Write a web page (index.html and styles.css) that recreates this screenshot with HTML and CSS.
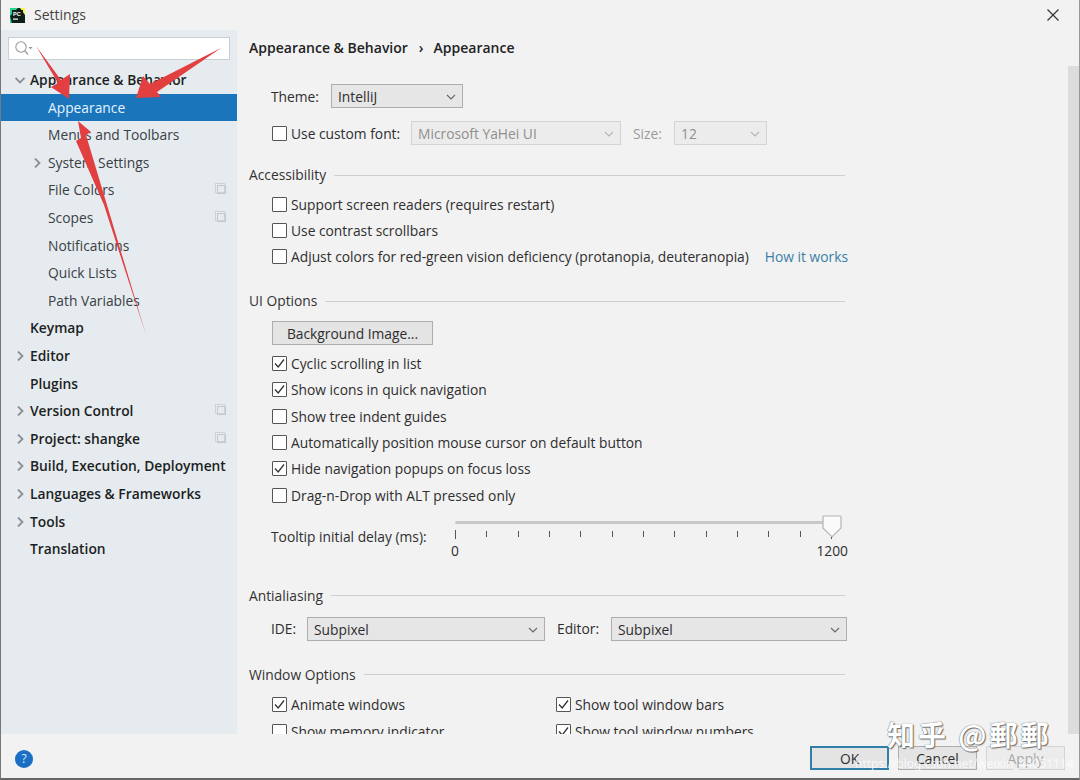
FILE: index.html
```html
<!DOCTYPE html>
<html lang="en" dir="ltr">
  <head>
    <meta charset="utf-8">
    <title>Settings</title>
    <link rel="stylesheet" href="styles.css">
  </head>
  <body>
    <div class="window">
      <div class="titlebar">
        <svg class="logo" width="15" height="15" viewBox="0 0 15 15">
          <rect width="15" height="15" fill="#0d1f1a"/>
          <path d="M0 0h8L0 8z" fill="#21d789"/>
          <path d="M15 0v7L10 0z" fill="#fcf84a"/>
          <path d="M0 15V8l2 7z" fill="#21d789"/>
          <rect x="2" y="2" width="11" height="11" fill="#0d1f1a"/>
          <rect x="3" y="10.5" width="5" height="1.2" fill="#fff"/>
          <text x="3" y="8" class="logo-text">PC</text>
        </svg>
        <span class="title">Settings</span>
        <svg class="close" width="12" height="12" viewBox="0 0 12 12"><path d="M0.5 0.5L11.5 11.5M11.5 0.5L0.5 11.5" stroke="#333" stroke-width="1.2" fill="none"/></svg>
      </div>

      <div class="main">
        <div class="sidebar">
          <div class="search">
            <svg width="20" height="16" viewBox="0 0 20 16"><circle cx="6" cy="6" r="5.2" fill="none" stroke="#9a9a9a" stroke-width="1.1"/><path d="M9.8 9.8L13 13.5" stroke="#9a9a9a" stroke-width="1.3"/><path d="M13.5 6h4l-2 2.5z" fill="#9a9a9a"/></svg>
          </div>
          <div class="tree">
            <div class="item bold"><svg class="arrow" width="10" height="10" viewBox="0 0 10 10"><path d="M0.5 3L5 7.5L9.5 3"/></svg>Appearance &amp; Behavior</div>
            <div class="item sub selected">Appearance</div>
            <div class="item sub">Menus and Toolbars</div>
            <div class="item sub"><svg class="arrow" width="10" height="10" viewBox="0 0 10 10"><path d="M3 0.5L7.5 5L3 9.5"/></svg>System Settings</div>
            <div class="item sub">File Colors<span class="copy"></span></div>
            <div class="item sub">Scopes<span class="copy"></span></div>
            <div class="item sub">Notifications</div>
            <div class="item sub">Quick Lists</div>
            <div class="item sub">Path Variables</div>
            <div class="item bold">Keymap</div>
            <div class="item bold"><svg class="arrow" width="10" height="10" viewBox="0 0 10 10"><path d="M3 0.5L7.5 5L3 9.5"/></svg>Editor</div>
            <div class="item bold">Plugins</div>
            <div class="item bold"><svg class="arrow" width="10" height="10" viewBox="0 0 10 10"><path d="M3 0.5L7.5 5L3 9.5"/></svg>Version Control<span class="copy"></span></div>
            <div class="item bold"><svg class="arrow" width="10" height="10" viewBox="0 0 10 10"><path d="M3 0.5L7.5 5L3 9.5"/></svg>Project: shangke<span class="copy"></span></div>
            <div class="item bold"><svg class="arrow" width="10" height="10" viewBox="0 0 10 10"><path d="M3 0.5L7.5 5L3 9.5"/></svg>Build, Execution, Deployment</div>
            <div class="item bold"><svg class="arrow" width="10" height="10" viewBox="0 0 10 10"><path d="M3 0.5L7.5 5L3 9.5"/></svg>Languages &amp; Frameworks</div>
            <div class="item bold"><svg class="arrow" width="10" height="10" viewBox="0 0 10 10"><path d="M3 0.5L7.5 5L3 9.5"/></svg>Tools</div>
            <div class="item bold">Translation</div>
          </div>
        </div>

        <div class="content">
          <div class="crumbs"><b>Appearance &amp; Behavior</b><span class="sep">›</span><b>Appearance</b></div>

          <div class="theme-row">
            <span class="label theme-label">Theme:</span>
            <div class="select theme">IntelliJ<svg class="chev" width="10" height="6" viewBox="0 0 10 6"><path d="M1 1l4 4 4-4"/></svg></div>
          </div>
          <div class="font-row">
            <span class="check"></span><span class="label font-label">Use custom font:</span>
            <div class="select off font">Microsoft YaHei UI<svg class="chev" width="10" height="6" viewBox="0 0 10 6"><path d="M1 1l4 4 4-4"/></svg></div>
            <span class="label dim size-label">Size:</span>
            <div class="select off size">12<svg class="chev" width="10" height="6" viewBox="0 0 10 6"><path d="M1 1l4 4 4-4"/></svg></div>
          </div>

          <div class="heading acc">Accessibility</div>
          <div class="opts">
            <div class="opt"><span class="check"></span>Support screen readers (requires restart)</div>
            <div class="opt"><span class="check"></span>Use contrast scrollbars</div>
            <div class="opt"><span class="check"></span>Adjust colors for red-green vision deficiency (protanopia, deuteranopia)<a class="link">How it works</a></div>
          </div>

          <div class="heading ui">UI Options</div>
          <div class="btn bg-btn">Background Image...</div>
          <div class="opts">
            <div class="opt"><span class="check on"><svg width="13" height="13" viewBox="0 0 13 13"><path d="M2 6.5l3.2 3.5L11 2.5"/></svg></span>Cyclic scrolling in list</div>
            <div class="opt"><span class="check on"><svg width="13" height="13" viewBox="0 0 13 13"><path d="M2 6.5l3.2 3.5L11 2.5"/></svg></span>Show icons in quick navigation</div>
            <div class="opt"><span class="check"></span>Show tree indent guides</div>
            <div class="opt"><span class="check"></span>Automatically position mouse cursor on default button</div>
            <div class="opt"><span class="check on"><svg width="13" height="13" viewBox="0 0 13 13"><path d="M2 6.5l3.2 3.5L11 2.5"/></svg></span>Hide navigation popups on focus loss</div>
            <div class="opt"><span class="check"></span>Drag-n-Drop with ALT pressed only</div>
          </div>

          <div class="slider-row">
            <span class="label slider-label">Tooltip initial delay (ms):</span>
            <div class="slider">
              <div class="track"></div>
              <svg class="thumb" width="20" height="25" viewBox="0 0 20 25"><path d="M2 1h16a1 1 0 0 1 1 1v11l-9 9-9-9V2a1 1 0 0 1 1-1z" fill="#fafafa" stroke="#b4b4b4" stroke-width="1.2"/></svg>
              <div class="ticks">
                <i class="long"></i><i></i><i></i><i></i><i></i><i></i><i></i><i></i><i></i><i></i><i></i><i></i><i class="long"></i>
              </div>
              <div class="scale"><span>0</span><span>1200</span></div>
            </div>
          </div>

          <div class="heading aa">Antialiasing</div>
          <div class="aa-row">
            <span class="label ide-label">IDE:</span>
            <div class="select ide">Subpixel<svg class="chev" width="10" height="6" viewBox="0 0 10 6"><path d="M1 1l4 4 4-4"/></svg></div>
            <span class="label editor-label">Editor:</span>
            <div class="select editor">Subpixel<svg class="chev" width="10" height="6" viewBox="0 0 10 6"><path d="M1 1l4 4 4-4"/></svg></div>
          </div>

          <div class="heading win">Window Options</div>
          <div class="two-col">
            <div class="opt"><span class="check on"><svg width="13" height="13" viewBox="0 0 13 13"><path d="M2 6.5l3.2 3.5L11 2.5"/></svg></span>Animate windows</div>
            <div class="opt"><span class="check on"><svg width="13" height="13" viewBox="0 0 13 13"><path d="M2 6.5l3.2 3.5L11 2.5"/></svg></span>Show tool window bars</div>
            <div class="opt"><span class="check"></span>Show memory indicator</div>
            <div class="opt"><span class="check on"><svg width="13" height="13" viewBox="0 0 13 13"><path d="M2 6.5l3.2 3.5L11 2.5"/></svg></span>Show tool window numbers</div>
          </div>
        </div>
        <div class="scrollbar"><div class="scroll-thumb"></div></div>
      </div>

      <div class="footer">
        <div class="help">?</div>
        <div class="buttons">
          <div class="btn primary">OK</div>
          <div class="btn">Cancel</div>
          <div class="btn disabled">Apply</div>
        </div>
      </div>
    </div>

    <svg class="marks" width="1080" height="780" viewBox="0 0 1080 780">
      <polygon points="36,46 61,80 70,74 69,99 51,87 58,83" fill="#e23f40"/>
      <polygon points="221,48 157,92 161,97 136,98 143,76 150,84" fill="#e23f40"/>
      <polygon points="78,121 91,132 86,135 146,335 104,205 76,141 81,138" fill="#e23f40"/>
    </svg>

    <div class="mark-text">知乎 @郵郵</div>
    <div class="mark-url">https://blog.csdn.net/weixin_44051114</div>
  </body>
</html>
```

FILE: styles.css
```css
*{
    margin: 0;
    padding: 0;
    box-sizing: border-box;
}
body{
    width: 1080px;
    height: 780px;
    overflow: hidden;
    font-family: "Open Sans", "Noto Sans", sans-serif;
    font-size: 13.8px;
    color: #2e2e2e;
    background: #f2f2f2;
    position: relative;
}
.window{
    height: 780px;
    display: flex;
    flex-direction: column;
    border-left: 1px solid #777;
    border-right: 1px solid #999;
    border-bottom: 2px solid #666;
    background: #f2f2f2;
}

/* title */
.titlebar{
    height: 30px;
    flex: none;
    display: flex;
    align-items: center;
    padding-left: 9px;
    padding-right: 20px;
}
.logo-text{
    font-family: "Liberation Sans", sans-serif;
    font-size: 5.5px;
    font-weight: bold;
    fill: #fff;
}
.title{
    margin-left: 9px;
    margin-bottom: 1px;
    font-size: 14px;
    color: #444;
}
.close{
    margin-left: auto;
}

/* left tree */
.main{
    flex: 1;
    display: flex;
    min-height: 0;
}
.sidebar{
    width: 236px;
    flex: none;
    background: #e6ebf0;
    padding-top: 7px;
}
.search{
    margin-left: 7px;
    width: 222px;
    height: 23px;
    background: #fff;
    border: 1px solid #c9ced3;
    padding: 3px 0 0 6px;
}
.tree{
    margin-top: 6px;
}
.item{
    height: 27.6px;
    line-height: 27.6px;
    padding-left: 29px;
    position: relative;
    white-space: nowrap;
    color: #3a3f44;
}
.item.bold{
    font-weight: 600;
    color: #1c1f22;
}
.item.sub{
    padding-left: 47px;
}
.item.selected{
    background: #1a75bb;
    color: #e3f3ff;
}
.arrow{
    position: absolute;
    left: 14px;
    top: 9px;
    fill: none;
    stroke: #8b8f93;
    stroke-width: 1.8;
}
.item.sub .arrow{
    left: 31px;
}
.copy{
    position: absolute;
    right: 11px;
    top: 9px;
    width: 9px;
    height: 9px;
    border: 1px solid #c3c8cd;
}
.copy::before{
    content: "";
    position: absolute;
    left: -3px;
    top: -3px;
    width: 8px;
    height: 8px;
    border: 1px solid #cdd2d7;
}

/* right panel */
.content{
    flex: 1;
    min-width: 0;
    overflow: hidden;
    padding: 8px 0 0 12px;
}
.crumbs{
    height: 20px;
    line-height: 20px;
    font-size: 14px;
    color: #222;
}
.crumbs b{
    font-weight: 600;
}
.sep{
    margin: 0 10px 0 11px;
    font-weight: 600;
}
.label{
    white-space: nowrap;
}
.dim{
    color: #9a9a9a;
}
.theme-row{
    margin-top: 26px;
    margin-left: 22px;
    height: 24px;
    display: flex;
    align-items: center;
}
.font-row{
    margin-top: 13px;
    margin-left: 23px;
    height: 24px;
    display: flex;
    align-items: center;
}
.select{
    height: 24px;
    line-height: 23px;
    background: #e6e6e6;
    border: 1px solid #adadad;
    padding-left: 6px;
    position: relative;
    color: #2e2e2e;
    flex: none;
}
.select.off{
    background: #ececec;
    border-color: #d4d4d4;
    color: #8f8f8f;
}
.chev{
    position: absolute;
    right: 6px;
    top: 9px;
    fill: none;
    stroke: #666;
    stroke-width: 1.1;
}
.off .chev{
    stroke: #b5b5b5;
}
.theme-label{
    width: 60px;
}
.theme{
    width: 132px;
}
.font-label{
    width: 120px;
}
.font{
    width: 210px;
}
.size-label{
    width: 41px;
    margin-left: 12px;
}
.size{
    width: 93px;
}
.heading{
    width: 596px;
    height: 20px;
    line-height: 20px;
    display: flex;
    align-items: center;
    gap: 8px;
    color: #333;
}
.heading::after{
    content: "";
    flex: 1;
    height: 1px;
    background: #cfcfcf;
}
.acc{ margin-top: 20px; }
.ui{ margin-top: 21px; }
.aa{ margin-top: 25px; }
.win{ margin-top: 24px; }
.opts{
    margin-left: 23px;
}
.acc + .opts{
    margin-top: 6px;
}
.opt{
    height: 26.4px;
    display: flex;
    align-items: center;
    white-space: nowrap;
}
.check{
    width: 15px;
    height: 15px;
    flex: none;
    border: 1.5px solid #555;
    background: #fff;
    margin-right: 4px;
    display: flex;
    align-items: center;
    justify-content: center;
    border-radius: 1px;
}
.check svg{
    fill: none;
    stroke: #333;
    stroke-width: 1.3;
}
.link{
    color: #3a7ea8;
    margin-left: 16px;
}
.btn{
    height: 24px;
    line-height: 23px;
    text-align: center;
    background: #e4e4e4;
    border: 1px solid #adadad;
}
.bg-btn{
    width: 161px;
    margin: 10px 0 5px 23px;
}
.slider-row{
    margin: 6px 0 0 22px;
    display: flex;
}
.slider-label{
    width: 184px;
    flex: none;
    margin-top: 12px;
    line-height: 20px;
}
.slider{
    width: 377px;
    position: relative;
    padding-top: 6px;
}
.track{
    height: 3px;
    background: #c8c8c8;
    border-radius: 2px;
}
.thumb{
    position: absolute;
    right: -10px;
    top: 0;
}
.ticks{
    margin-top: 6px;
    height: 9px;
    display: flex;
    justify-content: space-between;
}
.ticks i{
    width: 1px;
    height: 6px;
    margin-top: 1px;
    background: #555;
}
.ticks i.long{
    height: 9px;
    margin-top: 0;
}
.scale{
    display: flex;
    justify-content: space-between;
    line-height: 20px;
    margin: 2px -16px 0 -4px;
}
.aa-row{
    margin: 11px 0 0 22px;
    height: 24px;
    display: flex;
    align-items: center;
}
.ide-label{
    width: 36px;
}
.ide{
    width: 238px;
}
.editor-label{
    width: 54px;
    margin-left: 12px;
}
.editor{
    width: 236px;
}
.two-col{
    margin: 7px 0 0 23px;
    display: grid;
    grid-template-columns: 284px 1fr;
}
.scrollbar{
    width: 11px;
    flex: none;
    padding-top: 36px;
}
.scroll-thumb{
    height: 100%;
    background: #dcdcdc;
}

/* bottom */
.footer{
    height: 44px;
    flex: none;
    display: flex;
    justify-content: space-between;
    align-items: flex-start;
    padding: 12px 14px 0 14px;
}
.help{
    width: 18px;
    height: 18px;
    margin-top: 4px;
    border-radius: 50%;
    background: #1a6fc4;
    color: #dcecff;
    text-align: center;
    line-height: 18px;
    font-size: 12px;
}
.buttons{
    display: flex;
    gap: 9px;
}
.buttons .btn{
    width: 79px;
}
.btn.primary{
    border: 2px solid #2f7fa8;
    line-height: 21px;
}
.btn.disabled{
    color: #a8a8a8;
    border-color: #d4d4d4;
    background: #ececec;
}

/* annotations on top of the shot */
.marks{
    position: absolute;
    left: 0;
    top: 0;
}
.mark-text{
    position: absolute;
    left: 887px;
    top: 714px;
    font-family: "Noto Sans CJK SC", sans-serif;
    font-size: 28px;
    font-weight: 700;
    letter-spacing: 3px;
    color: #fff;
    text-shadow: 0 0 1px #333, 1px 1px 1px #777;
    white-space: nowrap;
}
.mark-url{
    position: absolute;
    left: 855px;
    top: 755px;
    font-family: "Noto Sans", sans-serif;
    font-size: 12px;
    color: rgba(255,255,255,0.75);
    white-space: nowrap;
}
```
